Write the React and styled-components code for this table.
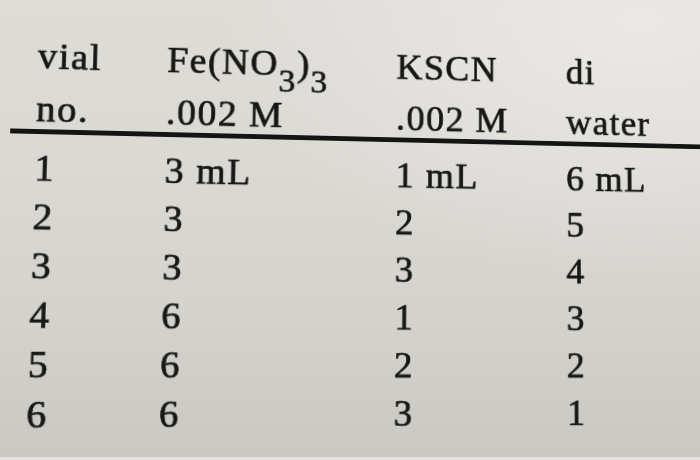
import React from "react";
import styled, { createGlobalStyle } from "styled-components";

const Global = createGlobalStyle`
  html, body { margin: 0; padding: 0; }
  body { width: 700px; height: 460px; overflow: hidden; }
`;

const Page = styled.div`
  width: 700px;
  height: 460px;
  display: flex;
  flex-direction: column;
  overflow: hidden;
`;

const Paper = styled.div`
  flex: 1;
  position: relative;
  overflow: hidden;
  background:
    radial-gradient(ellipse 420px 260px at 640px 20px, rgba(236, 235, 232, 0.85), rgba(236, 235, 232, 0) 100%),
    linear-gradient(180deg, #dedcd7 0%, #dbd9d4 35%, #d4d2cd 70%, #cac8c2 100%);
`;

const Edge = styled.div`
  height: 3px;
  background: #e4e3e0;
`;

const Sheet = styled.div`
  width: 700px;
  padding-top: 34.5px;
  transform-origin: 0 0;
  font-family: "Liberation Serif", "Times New Roman", serif;
  font-size: 37px;
  letter-spacing: 1.5px;
  color: #161616;
  -webkit-text-stroke: 0.7px #161616;
  filter: blur(0.25px);
`;

const Grid = styled.div`
  display: grid;
  grid-template-columns: 125px 229px 176px 1fr;
  padding-left: 36px;
  line-height: ${(p) => p.$lh}px;
  grid-auto-rows: ${(p) => p.$lh}px;
  row-gap: ${(p) => p.$gap || 0}px;
  margin-top: ${(p) => p.$mt || 0}px;
`;

const Cell = styled.div`
  white-space: nowrap;
`;

const Sub = styled.span`
  font-size: 0.9em;
  vertical-align: -17px;
`;

const Rule = styled.div`
  margin: 0.5px 0 0 12px;
  width: 740px;
  height: 4.5px;
  background: #141414;
`;

function homography(src, dst) {
  const A = [];
  const B = [];
  for (let i = 0; i < 4; i++) {
    const [x, y] = src[i];
    const [u, v] = dst[i];
    A.push([x, y, 1, 0, 0, 0, -x * u, -y * u]);
    B.push(u);
    A.push([0, 0, 0, x, y, 1, -x * v, -y * v]);
    B.push(v);
  }
  const n = 8;
  for (let c = 0; c < n; c++) {
    let p = c;
    for (let r = c + 1; r < n; r++) if (Math.abs(A[r][c]) > Math.abs(A[p][c])) p = r;
    [A[c], A[p]] = [A[p], A[c]];
    [B[c], B[p]] = [B[p], B[c]];
    for (let r = 0; r < n; r++) {
      if (r === c) continue;
      const f = A[r][c] / A[c][c];
      for (let k = c; k < n; k++) A[r][k] -= f * A[c][k];
      B[r] -= f * B[c];
    }
  }
  const h = B.map((b, i) => b / A[i][i]);
  const [a, b, c, d, e, f, g, k] = h;
  return `matrix3d(${a},${d},0,${g},${b},${e},0,${k},0,0,1,0,${c},${f},0,1)`;
}

const warp = homography(
  [
    [36, 131],
    [567, 131],
    [36, 425],
    [567, 425],
  ],
  [
    [35.5, 131],
    [567, 143.3],
    [26, 426.5],
    [568, 424],
  ]
);

const rows = [
  ["1", "3 mL", "1 mL", "6 mL"],
  ["2", "3", "2", "5"],
  ["3", "3", "3", "4"],
  ["4", "6", "1", "3"],
  ["5", "6", "2", "2"],
  ["6", "6", "3", "1"],
];

export default function App() {
  return (
    <Page>
      <Global />
      <Paper>
        <Sheet style={{ transform: warp }}>
          <Grid $lh={40} $gap={14}>
            <Cell>vial</Cell>
            <Cell>
              Fe(NO<Sub>3</Sub>)<Sub>3</Sub>
            </Cell>
            <Cell>KSCN</Cell>
            <Cell>di</Cell>
            <Cell>no.</Cell>
            <Cell>.002 M</Cell>
            <Cell>.002 M</Cell>
            <Cell>water</Cell>
          </Grid>
          <Rule />
          <Grid $lh={49} $mt={10}>
            {rows.map((r) =>
              r.map((v, j) => <Cell key={r[0] + "-" + j}>{v}</Cell>)
            )}
          </Grid>
        </Sheet>
      </Paper>
      <Edge />
    </Page>
  );
}
